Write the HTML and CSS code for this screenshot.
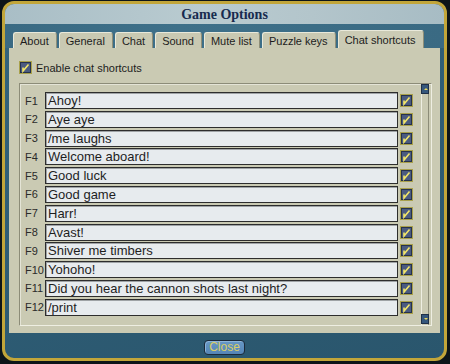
FILE: index.html
```html
<!DOCTYPE html>
<html lang="en">
<head>
    <meta charset="UTF-8">
    <title>Game Options</title>
    <link rel="stylesheet" href="styles.css">
</head>
<body>
    <div class="window">
        <div class="titlebar">Game Options</div>
        <div class="tabs">
            <div class="tab">About</div>
            <div class="tab">General</div>
            <div class="tab">Chat</div>
            <div class="tab">Sound</div>
            <div class="tab">Mute list</div>
            <div class="tab">Puzzle keys</div>
            <div class="tab active">Chat shortcuts</div>
        </div>
        <div class="panel">
            <label class="enable">
                <span class="chk"><svg width="13" height="13" viewBox="0 0 13 13"><rect x="0.5" y="0.5" width="12" height="12" fill="none" stroke="#a9a14c"/><rect x="1.5" y="1.5" width="10" height="10" fill="#4b5b80" stroke="#26324c"/><path d="M4 6.5 L4 10 L9.5 3.5" fill="none" stroke="#f2e66a" stroke-width="1.6"/></svg></span>
                Enable chat shortcuts
            </label>
            <div class="listbox">
                <div class="rows">
                    <div class="row"><span class="key">F1</span><div class="field">Ahoy!</div><span class="chk"><svg width="13" height="13" viewBox="0 0 13 13"><rect x="0.5" y="0.5" width="12" height="12" fill="none" stroke="#a9a14c"/><rect x="1.5" y="1.5" width="10" height="10" fill="#4b5b80" stroke="#26324c"/><path d="M4 6.5 L4 10 L9.5 3.5" fill="none" stroke="#f2e66a" stroke-width="1.6"/></svg></span></div>
                    <div class="row"><span class="key">F2</span><div class="field">Aye aye</div><span class="chk"><svg width="13" height="13" viewBox="0 0 13 13"><rect x="0.5" y="0.5" width="12" height="12" fill="none" stroke="#a9a14c"/><rect x="1.5" y="1.5" width="10" height="10" fill="#4b5b80" stroke="#26324c"/><path d="M4 6.5 L4 10 L9.5 3.5" fill="none" stroke="#f2e66a" stroke-width="1.6"/></svg></span></div>
                    <div class="row"><span class="key">F3</span><div class="field">/me laughs</div><span class="chk"><svg width="13" height="13" viewBox="0 0 13 13"><rect x="0.5" y="0.5" width="12" height="12" fill="none" stroke="#a9a14c"/><rect x="1.5" y="1.5" width="10" height="10" fill="#4b5b80" stroke="#26324c"/><path d="M4 6.5 L4 10 L9.5 3.5" fill="none" stroke="#f2e66a" stroke-width="1.6"/></svg></span></div>
                    <div class="row"><span class="key">F4</span><div class="field">Welcome aboard!</div><span class="chk"><svg width="13" height="13" viewBox="0 0 13 13"><rect x="0.5" y="0.5" width="12" height="12" fill="none" stroke="#a9a14c"/><rect x="1.5" y="1.5" width="10" height="10" fill="#4b5b80" stroke="#26324c"/><path d="M4 6.5 L4 10 L9.5 3.5" fill="none" stroke="#f2e66a" stroke-width="1.6"/></svg></span></div>
                    <div class="row"><span class="key">F5</span><div class="field">Good luck</div><span class="chk"><svg width="13" height="13" viewBox="0 0 13 13"><rect x="0.5" y="0.5" width="12" height="12" fill="none" stroke="#a9a14c"/><rect x="1.5" y="1.5" width="10" height="10" fill="#4b5b80" stroke="#26324c"/><path d="M4 6.5 L4 10 L9.5 3.5" fill="none" stroke="#f2e66a" stroke-width="1.6"/></svg></span></div>
                    <div class="row"><span class="key">F6</span><div class="field">Good game</div><span class="chk"><svg width="13" height="13" viewBox="0 0 13 13"><rect x="0.5" y="0.5" width="12" height="12" fill="none" stroke="#a9a14c"/><rect x="1.5" y="1.5" width="10" height="10" fill="#4b5b80" stroke="#26324c"/><path d="M4 6.5 L4 10 L9.5 3.5" fill="none" stroke="#f2e66a" stroke-width="1.6"/></svg></span></div>
                    <div class="row"><span class="key">F7</span><div class="field">Harr!</div><span class="chk"><svg width="13" height="13" viewBox="0 0 13 13"><rect x="0.5" y="0.5" width="12" height="12" fill="none" stroke="#a9a14c"/><rect x="1.5" y="1.5" width="10" height="10" fill="#4b5b80" stroke="#26324c"/><path d="M4 6.5 L4 10 L9.5 3.5" fill="none" stroke="#f2e66a" stroke-width="1.6"/></svg></span></div>
                    <div class="row"><span class="key">F8</span><div class="field">Avast!</div><span class="chk"><svg width="13" height="13" viewBox="0 0 13 13"><rect x="0.5" y="0.5" width="12" height="12" fill="none" stroke="#a9a14c"/><rect x="1.5" y="1.5" width="10" height="10" fill="#4b5b80" stroke="#26324c"/><path d="M4 6.5 L4 10 L9.5 3.5" fill="none" stroke="#f2e66a" stroke-width="1.6"/></svg></span></div>
                    <div class="row"><span class="key">F9</span><div class="field">Shiver me timbers</div><span class="chk"><svg width="13" height="13" viewBox="0 0 13 13"><rect x="0.5" y="0.5" width="12" height="12" fill="none" stroke="#a9a14c"/><rect x="1.5" y="1.5" width="10" height="10" fill="#4b5b80" stroke="#26324c"/><path d="M4 6.5 L4 10 L9.5 3.5" fill="none" stroke="#f2e66a" stroke-width="1.6"/></svg></span></div>
                    <div class="row"><span class="key">F10</span><div class="field">Yohoho!</div><span class="chk"><svg width="13" height="13" viewBox="0 0 13 13"><rect x="0.5" y="0.5" width="12" height="12" fill="none" stroke="#a9a14c"/><rect x="1.5" y="1.5" width="10" height="10" fill="#4b5b80" stroke="#26324c"/><path d="M4 6.5 L4 10 L9.5 3.5" fill="none" stroke="#f2e66a" stroke-width="1.6"/></svg></span></div>
                    <div class="row"><span class="key">F11</span><div class="field">Did you hear the cannon shots last night?</div><span class="chk"><svg width="13" height="13" viewBox="0 0 13 13"><rect x="0.5" y="0.5" width="12" height="12" fill="none" stroke="#a9a14c"/><rect x="1.5" y="1.5" width="10" height="10" fill="#4b5b80" stroke="#26324c"/><path d="M4 6.5 L4 10 L9.5 3.5" fill="none" stroke="#f2e66a" stroke-width="1.6"/></svg></span></div>
                    <div class="row"><span class="key">F12</span><div class="field">/print</div><span class="chk"><svg width="13" height="13" viewBox="0 0 13 13"><rect x="0.5" y="0.5" width="12" height="12" fill="none" stroke="#a9a14c"/><rect x="1.5" y="1.5" width="10" height="10" fill="#4b5b80" stroke="#26324c"/><path d="M4 6.5 L4 10 L9.5 3.5" fill="none" stroke="#f2e66a" stroke-width="1.6"/></svg></span></div>
                </div>
                <div class="scrollbar">
                    <span class="arrow up"></span>
                    <span class="arrow down"></span>
                </div>
            </div>
        </div>
        <div class="footer">
            <button class="close">Close</button>
        </div>
    </div>
</body>
</html>
```

FILE: styles.css
```css
body {
    margin: 0;
    background: #0d1519;
    font-family: "Liberation Sans", Arial, sans-serif;
    font-size: 11px;
}
.window {
    margin: 1px 0 0 2px;
    width: 445px;
    height: 360px;
    box-sizing: border-box;
    border: 3px solid #c2a63a;
    border-radius: 12px;
    background: linear-gradient(160deg, #33647d 0%, #2d5b73 60%, #2a566d 100%);
    overflow: hidden;
    display: flex;
    flex-direction: column;
}
.titlebar {
    height: 20px;
    line-height: 21px;
    text-align: center;
    font-family: "Liberation Serif", "Times New Roman", serif;
    font-weight: bold;
    font-size: 14px;
    color: #172b4e;
    background: linear-gradient(90deg, #a9bec6 0%, #b9cbd0 45%, #b3c5cb 70%, #a7bcc4 100%);
}
.tabs {
    display: flex;
    align-items: flex-end;
    gap: 2px;
    height: 24px;
    padding-left: 8px;
    background: linear-gradient(90deg, #3a6a83 0%, #3e7089 40%, #3a6a83 100%);
}
.tab {
    height: 15px;
    line-height: 16px;
    padding: 0 7px 0 6px;
    background: #c9c9b2;
    border-top: 1px solid #e9e9da;
    border-left: 1px solid #e9e9da;
    border-right: 1px solid #8e8e78;
    border-radius: 3px 3px 0 0;
    color: #1c1c1c;
}
.tab.active {
    height: 17px;
    line-height: 18px;
    background: #cbcbb5;
}
.panel {
    margin: 0 4px;
    height: 285px;
    box-sizing: border-box;
    padding: 13px 8px 7px 10px;
    background: #cacab3;
    display: flex;
    flex-direction: column;
}
.enable {
    display: flex;
    align-items: center;
    gap: 4px;
    height: 13px;
    color: #1c1c1c;
    margin-bottom: 9px;
}
.chk {
    display: block;
    width: 13px;
    height: 13px;
    flex: none;
}
.chk svg {
    display: block;
}
.listbox {
    flex: 1;
    display: flex;
    border-top: 1px solid #8c8c78;
    border-left: 1px solid #8c8c78;
    border-right: 1px solid #eeeee2;
    border-bottom: 1px solid #eeeee2;
    box-shadow: inset 1px 1px 0 #e4e4d6;
}
.rows {
    flex: 1;
    padding: 8px 0 0 5px;
    display: flex;
    flex-direction: column;
    gap: 1.8px;
}
.row {
    display: flex;
    align-items: center;
    height: 17px;
    gap: 2px;
}
.key {
    width: 18px;
    font-size: 11px;
    color: #2a2a2a;
    white-space: nowrap;
}
.field {
    flex: 1;
    height: 17px;
    box-sizing: border-box;
    line-height: 15px;
    padding-left: 2px;
    font-size: 13px;
    background: #e7ebee;
    border: 1px solid #2d2d2d;
    box-shadow: inset 1px 1px 0 #9fa3a6;
    color: #1e1e1e;
    white-space: nowrap;
    overflow: hidden;
}
.scrollbar {
    width: 6px;
    margin: 0 2px 0 8px;
    display: flex;
    flex-direction: column;
    justify-content: space-between;
    border-left: 1px solid #eeeee2;
    border-right: 1px solid #8c8c78;
    padding-bottom: 1px;
}
.arrow {
    display: block;
    height: 8px;
    background: #35577c;
    border: 1px solid #1f3048;
    margin: 0 -1px;
    position: relative;
}
.arrow::after {
    content: "";
    position: absolute;
    left: 2px;
    top: 3px;
    border-left: 2px solid transparent;
    border-right: 2px solid transparent;
}
.arrow.up::after {
    border-bottom: 2px solid #e8d860;
}
.arrow.down::after {
    border-top: 2px solid #e8d860;
}
.footer {
    flex: 1;
    display: flex;
    justify-content: center;
    padding-top: 7px;
}
.close {
    width: 41px;
    height: 15px;
    padding: 0;
    font-family: "Liberation Sans", Arial, sans-serif;
    font-size: 12px;
    line-height: 13px;
    color: #d9cd66;
    background: linear-gradient(180deg, #6798c6, #5585b6);
    border: 1px solid #1b2a3a;
    border-radius: 4px;
    box-shadow: inset 1px 1px 0 #8cb4da;
}
```
